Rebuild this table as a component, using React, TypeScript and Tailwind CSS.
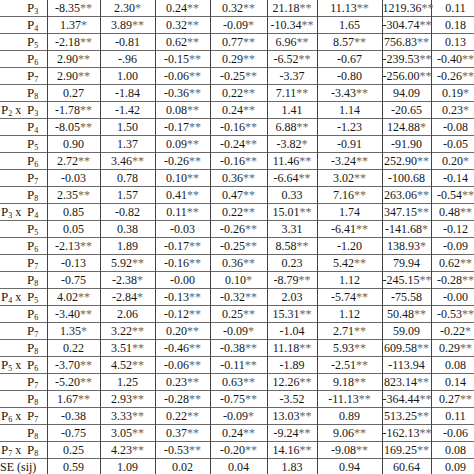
const rows: { pre?: string; j: string; v: string[] }[] = [
  { j: "3", v: ["-8.35**", "2.30*", "0.24**", "0.32**", "21.18**", "11.13**", "1219.36**", "0.11"] },
  { j: "4", v: ["1.37*", "3.89**", "0.32**", "-0.09*", "-10.34**", "1.65", "-304.74**", "0.18"] },
  { j: "5", v: ["-2.18**", "-0.81", "0.62**", "0.77**", "6.96**", "8.57**", "756.83**", "0.13"] },
  { j: "6", v: ["2.90**", "-.96", "-0.15**", "0.29**", "-6.52**", "-0.67", "-239.53**", "-0.40**"] },
  { j: "7", v: ["2.90**", "1.00", "-0.06**", "-0.25**", "-3.37", "-0.80", "-256.00**", "-0.26**"] },
  { j: "8", v: ["0.27", "-1.84", "-0.36**", "0.22**", "7.11**", "-3.43**", "94.09", "0.19*"] },
  { pre: "2", j: "3", v: ["-1.78**", "-1.42", "0.08**", "0.24**", "1.41", "1.14", "-20.65", "0.23*"] },
  { j: "4", v: ["-8.05**", "1.50", "-0.17**", "-0.16**", "6.88**", "-1.23", "124.88*", "-0.08"] },
  { j: "5", v: ["0.90", "1.37", "0.09**", "-0.24**", "-3.82*", "-0.91", "-91.90", "-0.05"] },
  { j: "6", v: ["2.72**", "3.46**", "-0.26**", "-0.16**", "11.46**", "-3.24**", "252.90**", "0.20*"] },
  { j: "7", v: ["-0.03", "0.78", "0.10**", "0.36**", "-6.64**", "3.02**", "-100.68", "-0.14"] },
  { j: "8", v: ["2.35**", "1.57", "0.41**", "0.47**", "0.33", "7.16**", "263.06**", "-0.54**"] },
  { pre: "3", j: "4", v: ["0.85", "-0.82", "0.11**", "0.22**", "15.01**", "1.74", "347.15**", "0.48**"] },
  { j: "5", v: ["0.05", "0.38", "-0.03", "-0.26**", "3.31", "-6.41**", "-141.68*", "-0.12"] },
  { j: "6", v: ["-2.13**", "1.89", "-0.17**", "-0.25**", "8.58**", "-1.20", "138.93*", "-0.09"] },
  { j: "7", v: ["-0.13", "5.92**", "-0.16**", "0.36**", "0.23", "5.42**", "79.94", "0.62**"] },
  { j: "8", v: ["-0.75", "-2.38*", "-0.00", "0.10*", "-8.79**", "1.12", "-245.15**", "-0.28**"] },
  { pre: "4", j: "5", v: ["4.02**", "-2.84*", "-0.13**", "-0.32**", "2.03", "-5.74**", "-75.58", "-0.00"] },
  { j: "6", v: ["-3.40**", "2.06", "-0.12**", "0.25**", "15.31**", "1.12", "50.48**", "-0.53**"] },
  { j: "7", v: ["1.35*", "3.22**", "0.20**", "-0.09*", "-1.04", "2.71**", "59.09", "-0.22*"] },
  { j: "8", v: ["0.22", "3.51**", "-0.46**", "-0.38**", "11.18**", "5.93**", "609.58**", "0.29**"] },
  { pre: "5", j: "6", v: ["-3.70**", "4.52**", "-0.06**", "-0.11**", "-1.89", "-2.51**", "-113.94", "0.08"] },
  { j: "7", v: ["-5.20**", "1.25", "0.23**", "0.63**", "12.26**", "9.18**", "823.14**", "0.14"] },
  { j: "8", v: ["1.67**", "2.93**", "-0.28**", "-0.75**", "-3.52", "-11.13**", "-364.44**", "0.27**"] },
  { pre: "6", j: "7", v: ["-0.38", "3.33**", "0.22**", "-0.09*", "13.03**", "0.89", "513.25**", "0.11"] },
  { j: "8", v: ["-0.75", "3.05**", "0.37**", "0.24**", "-9.24**", "9.06**", "-162.13**", "-0.06"] },
  { pre: "7", j: "8", v: ["0.25", "4.23**", "-0.53**", "-0.20**", "14.16**", "-9.08**", "169.25**", "0.08"] },
];

const se = ["0.59", "1.09", "0.02", "0.04", "1.83", "0.94", "60.64", "0.09"];

const widths = ["w-[47px]", "w-[53px]", "w-[55px]", "w-[55px]", "w-[57px]", "w-[50px]", "w-[65px]", "w-[49px]", "w-[49px]"];

function Value({ text }: { text: string }) {
  const m = text.match(/^([^*]*)(\**)$/);
  const num = m ? m[1] : text;
  const stars = m ? m[2] : "";
  return (
    <>
      {num}
      {stars && <span className="text-[#666]">{stars}</span>}
    </>
  );
}

function P({ n }: { n: string }) {
  return (
    <span className="text-[13px]">
      P<sub className="text-[8px] bottom-[-2px]">{n}</sub>
    </span>
  );
}

export default function App() {
  return (
    <div className="w-[474px] h-[474px] overflow-hidden bg-white">
      <table
        className="table-fixed border-collapse w-[480px] mt-[-1px] text-[12px] leading-[16px] text-[#161616]"
        style={{ fontFamily: '"Liberation Serif", "Times New Roman", serif' }}
      >
        <colgroup>
          {widths.map((w, i) => (
            <col key={i} className={w} />
          ))}
        </colgroup>
        <tbody>
          {rows.map((r, i) => (
            <tr key={i} className="h-[17px] border-y border-[#6a6a6a]">
              <td className="p-0 border-r border-[#444] whitespace-nowrap">
                <div className="flex items-center">
                  <span className="w-[27px] pl-[1px]">
                    {r.pre && (
                      <>
                        <P n={r.pre} /> x
                      </>
                    )}
                  </span>
                  <P n={r.j} />
                </div>
              </td>
              {r.v.map((v, k) => (
                <td key={k} className="p-0 text-center whitespace-nowrap border-x border-[#444]">
                  <Value text={v} />
                </td>
              ))}
            </tr>
          ))}
          <tr className="h-[17px] border-y border-[#6a6a6a]">
            <td className="p-0 border-r border-[#444] whitespace-nowrap">
              <span className="text-[12px]">SE (sij)</span>
            </td>
            {se.map((v, k) => (
              <td key={k} className="p-0 text-center whitespace-nowrap border-x border-[#444]">
                {v}
              </td>
            ))}
          </tr>
        </tbody>
      </table>
    </div>
  );
}
